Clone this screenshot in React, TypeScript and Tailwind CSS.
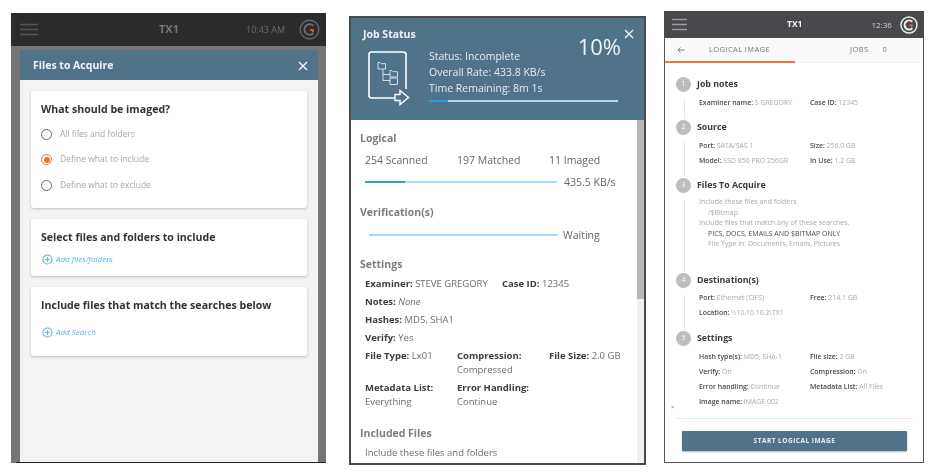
import React from "react";

const font = { fontFamily: '"Open Sans", "Liberation Sans", sans-serif' };

function Menu({ color, width }: { color: string; width: number }) {
  return (
    <svg width={width} height="13" viewBox={`0 0 ${width} 13`} className="shrink-0">
      <path d={`M0 1.500H${width}M0 6.500H${width}M0 11.500H${width}`} stroke={color} strokeWidth="1.500" />
    </svg>
  );
}

function Logo({ stroke, dot, size = 21, ring = 1.2, g = 2 }: { stroke: string; dot: string; size?: number; ring?: number; g?: number }) {
  return (
    <svg width={size} height={size} viewBox="0 0 22 22" className="shrink-0">
      <circle cx="11" cy="11" r="9.8" fill="none" stroke={stroke} strokeWidth={ring} />
      <path d="M15 7A5.500 5.500 0 1 0 15 15" fill="none" stroke={stroke} strokeWidth={g} />
      <path d="M11.500 10.500H15.500V14H13.500V12.300H11.500Z" fill={dot} />
    </svg>
  );
}

function Radio({ label, on }: { label: string; on?: boolean }) {
  return (
    <div className="flex h-[25.500px] items-center gap-[8px]">
      <span
        className={`flex h-[11px] w-[11px] items-center justify-center rounded-full border ${
          on ? "border-[#f0743a]" : "border-[#666666]"
        }`}
      >
        {on && <span className="h-[6px] w-[6px] rounded-full bg-[#f0743a]" />}
      </span>
      <span className="text-[8.500px] text-[#a8a8a8]">{label}</span>
    </div>
  );
}

function AddLink({ label }: { label: string }) {
  return (
    <div className="ml-px flex items-center gap-[3px] text-[8px] italic leading-[12px] text-[#4db4ef]">
      <svg width="11" height="11" viewBox="0 0 12 12">
        <circle cx="6" cy="6" r="5" fill="none" stroke="#4db4ef" strokeWidth="1.100" />
        <path d="M3.500 6H8.500M6 3.500V8.500" stroke="#4db4ef" strokeWidth="1.100" />
      </svg>
      <span>{label}</span>
    </div>
  );
}

function Card({ className, children }: { className: string; children: React.ReactNode }) {
  return (
    <div className={`rounded-[3px] bg-white pl-[10px] shadow-[0_1px_3px_rgba(0,0,0,0.22)] ${className}`}>
      {children}
    </div>
  );
}

function FilesPanel() {
  return (
    <div className="relative mt-[13px] flex h-[450px] w-[315px] shrink-0 flex-col bg-[#757575]">
      <div className="flex h-[33px] shrink-0 items-center bg-[#2b2c2e] pl-[9px] pr-[6px]">
        <Menu color="#555555" width={18} />
        <span className="ml-[121px] text-[11px] font-bold text-[#777777]">TX1</span>
        <span className="ml-[67px] text-[9px] text-[#6b6b6b]">10:43 AM</span>
        <span className="ml-auto">
          <Logo stroke="#6f6f6f" dot="#e2562a" />
        </span>
      </div>
      <div className="ml-[9px] mr-[8px] mt-[4px] flex flex-1 flex-col bg-[#f3f3f3]">
        <div className="flex h-[30px] shrink-0 items-center justify-between bg-[#4f7489] pl-[13px] pr-[10px] pt-[2px] text-white">
          <span className="text-[10.500px] font-bold text-[#f0f4f6]">Files to Acquire</span>
          <svg width="10" height="10" viewBox="0 0 10 10">
            <path d="M1 1L9 9M9 1L1 9" stroke="#ffffff" strokeWidth="1.200" />
          </svg>
        </div>
        <div className="flex flex-col gap-[11px] px-[11px] pt-[11px]">
          <Card className="h-[117px] pt-[9px]">
            <div className="text-[10.600px] font-bold leading-[18px] text-[#333333]">What should be imaged?</div>
            <div className="mt-[3.500px]">
              <Radio label="All files and folders" />
              <Radio label="Define what to include" on />
              <Radio label="Define what to exclude" />
            </div>
          </Card>
          <Card className="h-[57px] pt-[10px]">
            <div className="text-[10.600px] font-bold leading-[16px] text-[#333333]">Select files and folders to include</div>
            <div className="mt-[8px]">
              <AddLink label="Add files/folders" />
            </div>
          </Card>
          <Card className="h-[69px] pt-[10px]">
            <div className="text-[10.600px] font-bold leading-[16px] text-[#333333]">Include files that match the searches below</div>
            <div className="mt-[13px]">
              <AddLink label="Add Search" />
            </div>
          </Card>
        </div>
      </div>
      <div className="absolute bottom-[0.500px] left-[5px] right-0 h-px bg-[#222222]" />
    </div>
  );
}

function JobIcon() {
  return (
    <svg width="42" height="56" viewBox="0 0 42 56" className="shrink-0">
      <path
        d="M27 47H3.500Q1 47 1 44.500V3.500Q1 1 3.500 1H35Q38 1 38 3.500V38"
        fill="none"
        stroke="#ffffff"
        strokeWidth="1.600"
      />
      <path d="M27 43.500H32V39.500L40.500 46.500L32 53.500V49.500H27Z" fill="none" stroke="#ffffff" strokeWidth="1.400" />
      <g fill="none" stroke="#dfe8ed" strokeWidth="0.900">
        <path d="M10 11.500H12L13 12.700H17.500V18H10Z" />
        <path d="M15 18V29.500H22M15 23.500H22" />
        <path d="M22 19.500H24L25 20.700H29.500V26H22Z" />
        <path d="M22 27H29.500V33.500H22Z" />
      </g>
    </svg>
  );
}

function Bar({ width, fill }: { width: string; fill?: string }) {
  return (
    <div className={`relative h-[2px] bg-[#a5daf8] ${width}`}>
      {fill && <div className={`absolute left-0 top-0 h-full bg-[#2f9be0] ${fill}`} />}
    </div>
  );
}

function SectionTitle({ children, className = "" }: { children: React.ReactNode; className?: string }) {
  return <div className={`text-[10.500px] font-bold leading-[14px] text-[#7d7d7d] ${className}`}>{children}</div>;
}

function KV({ k, v, italic }: { k: string; v: string; italic?: boolean }) {
  return (
    <div className="whitespace-nowrap text-[9.500px] leading-[14px] text-[#6e6e6e]">
      <b className="font-bold text-[#3d3d3d]">{k}</b> <span className={italic ? "italic" : ""}>{v}</span>
    </div>
  );
}

function StatusPanel() {
  return (
    <div className="ml-[23px] mt-[16px] flex h-[449px] w-[297px] shrink-0 flex-col overflow-hidden border-2 border-[#4a4a4a]">
      <div className="relative h-[102px] shrink-0 bg-[#4f7489] text-[#e4ecf0]">
        <div className="pl-[12px] pt-[9px] text-[10.500px] font-bold leading-[14px] text-[#eef3f5]">Job Status</div>
        <div className="flex pl-[17px] pt-[10px]">
          <JobIcon />
          <div className="-mt-[3px] ml-[19px] w-[190px]">
            <div className="text-[10.500px] leading-[16px]">Status: Incomplete</div>
            <div className="text-[10.500px] leading-[16px]">Overall Rate: 433.8 KB/s</div>
            <div className="text-[10.500px] leading-[16px]">Time Remaining: 8m 1s</div>
            <div className="mt-[4px]">
              <Bar width="w-[189px]" fill="w-[19px]" />
            </div>
          </div>
        </div>
        <div className="absolute right-[23px] top-[13px] text-[22px] leading-[30px] text-[#eef3f5]">10%</div>
        <svg width="10" height="10" viewBox="0 0 10 10" className="absolute right-[10px] top-[11px]">
          <path d="M1 1L9 9M9 1L1 9" stroke="#ffffff" strokeWidth="1.100" />
        </svg>
      </div>
      <div className="flex min-h-0 flex-1 bg-white">
        <div className="min-w-0 flex-1 pl-[9px] pt-[11px]">
          <SectionTitle>Logical</SectionTitle>
          <div className="mt-[8px] flex pl-[5px] text-[10.500px] leading-[14px] text-[#666666]">
            <span className="w-[92px]">254 Scanned</span>
            <span className="w-[92px]">197 Matched</span>
            <span>11 Imaged</span>
          </div>
          <div className="mt-[8px] flex items-center pl-[5px]">
            <Bar width="w-[192px]" fill="w-[40px]" />
            <span className="ml-[7px] text-[10.500px] leading-[14px] text-[#666666]">435.5 KB/s</span>
          </div>
          <SectionTitle className="mt-[16px]">Verification(s)</SectionTitle>
          <div className="mt-[9px] flex items-center pl-[9px]">
            <Bar width="w-[189px]" />
            <span className="ml-[5px] text-[10.500px] leading-[14px] text-[#666666]">Waiting</span>
          </div>
          <SectionTitle className="mt-[15px]">Settings</SectionTitle>
          <div className="mt-[4px] flex h-[18px] items-center pl-[5px]">
            <div className="w-[137px]"><KV k="Examiner:" v="STEVE GREGORY" /></div>
            <KV k="Case ID:" v="12345" />
          </div>
          <div className="flex h-[18px] items-center pl-[5px]"><KV k="Notes:" v="None" italic /></div>
          <div className="flex h-[18px] items-center pl-[5px]"><KV k="Hashes:" v="MD5, SHA1" /></div>
          <div className="flex h-[18px] items-center pl-[5px]"><KV k="Verify:" v="Yes" /></div>
          <div className="flex pl-[5px] pt-[2px]">
            <div className="w-[92px]"><KV k="File Type:" v="Lx01" /></div>
            <div className="flex w-[92px] flex-col text-[9.500px] leading-[14px] text-[#6e6e6e]">
              <b className="font-bold text-[#3d3d3d]">Compression:</b>
              <span>Compressed</span>
            </div>
            <KV k="File Size:" v="2.0 GB" />
          </div>
          <div className="mt-[4px] flex pl-[5px]">
            <div className="flex w-[92px] flex-col text-[9.500px] leading-[14px] text-[#6e6e6e]">
              <b className="font-bold text-[#3d3d3d]">Metadata List:</b>
              <span>Everything</span>
            </div>
            <div className="flex flex-col text-[9.500px] leading-[14px] text-[#6e6e6e]">
              <b className="font-bold text-[#3d3d3d]">Error Handling:</b>
              <span>Continue</span>
            </div>
          </div>
          <SectionTitle className="mt-[17px]">Included Files</SectionTitle>
          <div className="mt-[6px] whitespace-nowrap pl-[5px] text-[9.500px] leading-[14px] text-[#6e6e6e]">Include these files and folders</div>
        </div>
        <div className="w-[7px] shrink-0 bg-[#f0f0f0]">
          <div className="h-[179px] bg-[#b8b8b8]" />
        </div>
      </div>
    </div>
  );
}

function Step({ n, title, children, h, line = true }: { n: number; title: string; children: React.ReactNode; h: string; line?: boolean }) {
  return (
    <div className={`relative pl-[32px] ${h}`}>
      {line && <div className="absolute bottom-[1px] left-[18.500px] top-[22px] w-px bg-[#e6e6e6]" />}
      <div className="absolute left-[11px] top-0 flex h-[15px] w-[15px] items-center justify-center rounded-full bg-[#bdbdbd] text-[7px] text-white">
        {n}
      </div>
      <div className="text-[8.800px] font-bold leading-[15px] text-[#3a3a3a]">{title}</div>
      <div className="mt-[4px] pl-[2px]">{children}</div>
    </div>
  );
}

function Row({ a, b }: { a: [string, string]; b?: [string, string] }) {
  return (
    <div className="flex h-[15px] items-center text-[6.900px] text-[#a9a9a9]">
      <span className="w-[111px] shrink-0 whitespace-nowrap">
        <b className="font-semibold text-[#4a4a4a]">{a[0]}</b> {a[1]}
      </span>
      {b && (
        <span className="whitespace-nowrap">
          <b className="font-semibold text-[#4a4a4a]">{b[0]}</b> {b[1]}
        </span>
      )}
    </div>
  );
}

function ImagePanel() {
  return (
    <div className="relative ml-[18px] mt-[11px] flex h-[452px] w-[260px] shrink-0 flex-col border-x border-b border-[#555555]">
      <div className="-mx-px flex h-[27px] shrink-0 items-center bg-[#47494c] pl-[8px] pr-[6px]">
        <Menu color="#9a9a9a" width={15} />
        <span className="ml-[100px] text-[8.500px] font-bold text-[#f0f0f0]">TX1</span>
        <span className="ml-[69px] text-[8px] text-[#d5d5d5]">12:36</span>
        <span className="ml-auto">
          <Logo stroke="#ececec" dot="#ee6a2e" size={18} ring={1.800} g={2.600} />
        </span>
      </div>
      <div className="flex h-[24px] shrink-0 items-center bg-[#fafafa] text-[7.500px] tracking-[0.4px] text-[#777777]">
        <svg width="8" height="8" viewBox="0 0 8 8" className="ml-[12px]">
          <path d="M7.500 4H1M3.500 1.500L1 4L3.500 6.500" fill="none" stroke="#666666" strokeWidth="0.800" />
        </svg>
        <span className="ml-[24px]">LOGICAL IMAGE</span>
        <span className="ml-[80px]">JOBS</span>
        <span className="ml-[14px]">0</span>
      </div>
      <div className="relative h-[1px] shrink-0 bg-[#f0f0f0]">
        <div className="absolute -top-[1px] left-0 h-[2px] w-[130px] bg-[#f0743a]" />
      </div>
      <div className="min-h-0 flex-1 bg-white pt-[14px]">
        <Step n={1} title="Job notes" h="h-[43px]">
          <Row a={["Examiner name:", "S GREGORY"]} b={["Case ID:", "12345"]} />
        </Step>
        <Step n={2} title="Source" h="h-[58px]">
          <Row a={["Port:", "SATA/SAS 1"]} b={["Size:", "256.0 GB"]} />
          <Row a={["Model:", "SSD 850 PRO 256GB"]} b={["In Use:", "1.2 GB"]} />
        </Step>
        <Step n={3} title="Files To Acquire" h="h-[95px]">
          <div className="mt-[3px] text-[7px] leading-[10.500px] text-[#a9a9a9]">
            <div>Include these files and folders</div>
            <div className="pl-[9px]">/$Bitmap</div>
            <div>Include files that match any of these searches.</div>
            <div className="pl-[9px] text-[#4a4a4a]">PICS, DOCS, EMAILS AND $BITMAP ONLY</div>
            <div className="pl-[9px]">File Type in: Documents, Emails, Pictures</div>
          </div>
        </Step>
        <Step n={4} title="Destination(s)" h="h-[58px]">
          <div className="-mt-px">
            <Row a={["Port:", "Ethernet (CIFS)"]} b={["Free:", "214.1 GB"]} />
            <Row a={["Location:", "\\\\10.10.10.2\\TX1"]} />
          </div>
        </Step>
        <Step n={5} title="Settings" h="h-[77px]" line={false}>
          <Row a={["Hash type(s):", "MD5, SHA-1"]} b={["File size:", "2 GB"]} />
          <Row a={["Verify:", "On"]} b={["Compression:", "On"]} />
          <Row a={["Error handling:", "Continue"]} b={["Metadata List:", "All Files"]} />
          <Row a={["Image name:", "IMAGE 002"]} />
        </Step>
      </div>
      <div className="mx-[10px] h-px shrink-0 bg-[#e8e8e8]" />
      <div className="flex h-[43px] shrink-0 items-start justify-center bg-white pt-[12px]">
        <button className="ml-px h-[20px] w-[225px] rounded-[1px] bg-[#4f7489] text-[6.500px] font-bold tracking-[0.5px] text-[#e8eef1] shadow-[0_1px_2px_rgba(0,0,0,0.3)]">
          START LOGICAL IMAGE
        </button>
      </div>
      <span className="absolute left-[6px] top-[393px] text-[6px] leading-[6px] text-[#777777]">×</span>
    </div>
  );
}

export default function App() {
  return (
    <div className="flex h-[473px] w-[937px] items-start overflow-hidden bg-white pl-[11px] blur-[0.4px]" style={font}>
      <FilesPanel />
      <StatusPanel />
      <ImagePanel />
    </div>
  );
}
